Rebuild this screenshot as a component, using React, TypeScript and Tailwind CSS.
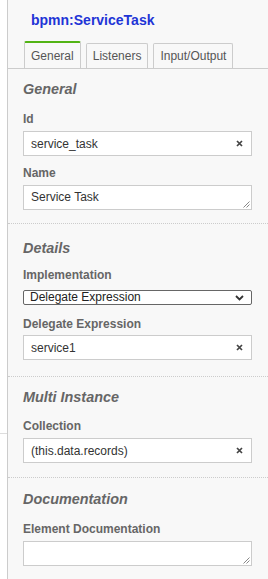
import React from "react";

function ClearIcon() {
  return (
    <svg width="7" height="7" viewBox="0 0 7 7" className="shrink-0">
      <path d="M1 1 L6 6 M6 1 L1 6" stroke="#444" strokeWidth="1.7" />
    </svg>
  );
}

function Grip() {
  return (
    <svg width="8" height="8" viewBox="0 0 8 8" className="absolute bottom-[1px] right-[1px]">
      <path d="M7.5 1.5 L1.5 7.5 M7.5 4.5 L4.5 7.5" stroke="#888" strokeWidth="1" />
    </svg>
  );
}

function Label({ text, className }: { text: string; className: string }) {
  return <div className={"text-[12px] leading-[14px] font-bold text-[#666] " + className}>{text}</div>;
}

function Heading({ text }: { text: string }) {
  return <div className="text-[14.4px] leading-[17px] font-bold italic text-[#666]">{text}</div>;
}

function TextInput({ value, className }: { value: string; className: string }) {
  return (
    <div className={"flex h-[25px] items-center justify-between border border-[#ccc] bg-white pl-[7px] pr-[8px] text-[12px] text-[#333] " + className}>
      <span>{value}</span>
      <ClearIcon />
    </div>
  );
}

function TextBox({ value, className }: { value: string; className: string }) {
  return (
    <div className={"relative h-[25px] border border-[#ccc] bg-white pl-[7px] pt-[4px] text-[12px] leading-[14px] text-[#333] " + className}>
      {value}
      <Grip />
    </div>
  );
}

export default function App() {
  return (
    <div className="flex h-[579px] w-[268px] overflow-hidden bg-white font-['Liberation_Sans',Arial,sans-serif]">
      <div className="relative w-[7px] shrink-0 bg-white">
        <div className="absolute left-0 top-[433px] h-px w-[7px] bg-[#ddd]" />
      </div>
      <div className="flex flex-1 flex-col border-l border-[#ccc] bg-[#f8f8f8]">
        <div className="pl-[23px] pt-[12px] text-[14px] font-bold leading-[16px] text-[#1f35d6]">bpmn:ServiceTask</div>

        <div className="mt-[13px] flex items-end gap-[5px] border-b border-[#ccc] pl-[16px] text-[12px] leading-[14px] text-[#555]">
          <div className="flex h-[27px] items-center rounded-t-[2px] border-x border-t-2 border-x-[#ccc] border-t-[#52b415] bg-[#f8f8f8] px-[6px]">General</div>
          <div className="flex h-[25px] items-center rounded-t-[2px] border-x border-t border-[#ccc] bg-[#f8f8f8] px-[6px]">Listeners</div>
          <div className="flex h-[25px] items-center rounded-t-[2px] border-x border-t border-[#ccc] bg-[#f8f8f8] px-[6px]">Input/Output</div>
        </div>

        <div className="border-b border-dotted border-[#ccc] pb-[13px] pl-[15px] pr-[16px] pt-[12px]">
          <Heading text="General" />
          <Label text="Id" className="mt-[14px]" />
          <TextInput value="service_task" className="mt-[5px]" />
          <Label text="Name" className="mt-[10px]" />
          <TextBox value="Service Task" className="mt-[5px]" />
        </div>

        <div className="border-b border-dotted border-[#ccc] pb-[16px] pl-[15px] pr-[16px] pt-[16px]">
          <Heading text="Details" />
          <Label text="Implementation" className="mt-[11px]" />
          <div className="mt-[8px] flex h-[15px] items-center justify-between rounded-[2px] border border-[#666] bg-white pl-[6px] pr-[7px] text-[12px] leading-[13px] text-[#222]">
            <span>Delegate Expression</span>
            <svg width="9" height="6" viewBox="0 0 9 6">
              <path d="M1 1 L4.5 4.5 L8 1" stroke="#333" strokeWidth="1.8" fill="none" />
            </svg>
          </div>
          <Label text="Delegate Expression" className="mt-[12px]" />
          <TextInput value="service1" className="mt-[4px]" />
        </div>

        <div className="border-b border-dotted border-[#ccc] pb-[14px] pl-[15px] pr-[16px] pt-[12px]">
          <Heading text="Multi Instance" />
          <Label text="Collection" className="mt-[13px]" />
          <TextInput value="(this.data.records)" className="mt-[5px]" />
        </div>

        <div className="pl-[15px] pr-[16px] pt-[13px]">
          <Heading text="Documentation" />
          <Label text="Element Documentation" className="mt-[14px]" />
          <TextBox value="" className="mt-[5px]" />
        </div>
      </div>
    </div>
  );
}
